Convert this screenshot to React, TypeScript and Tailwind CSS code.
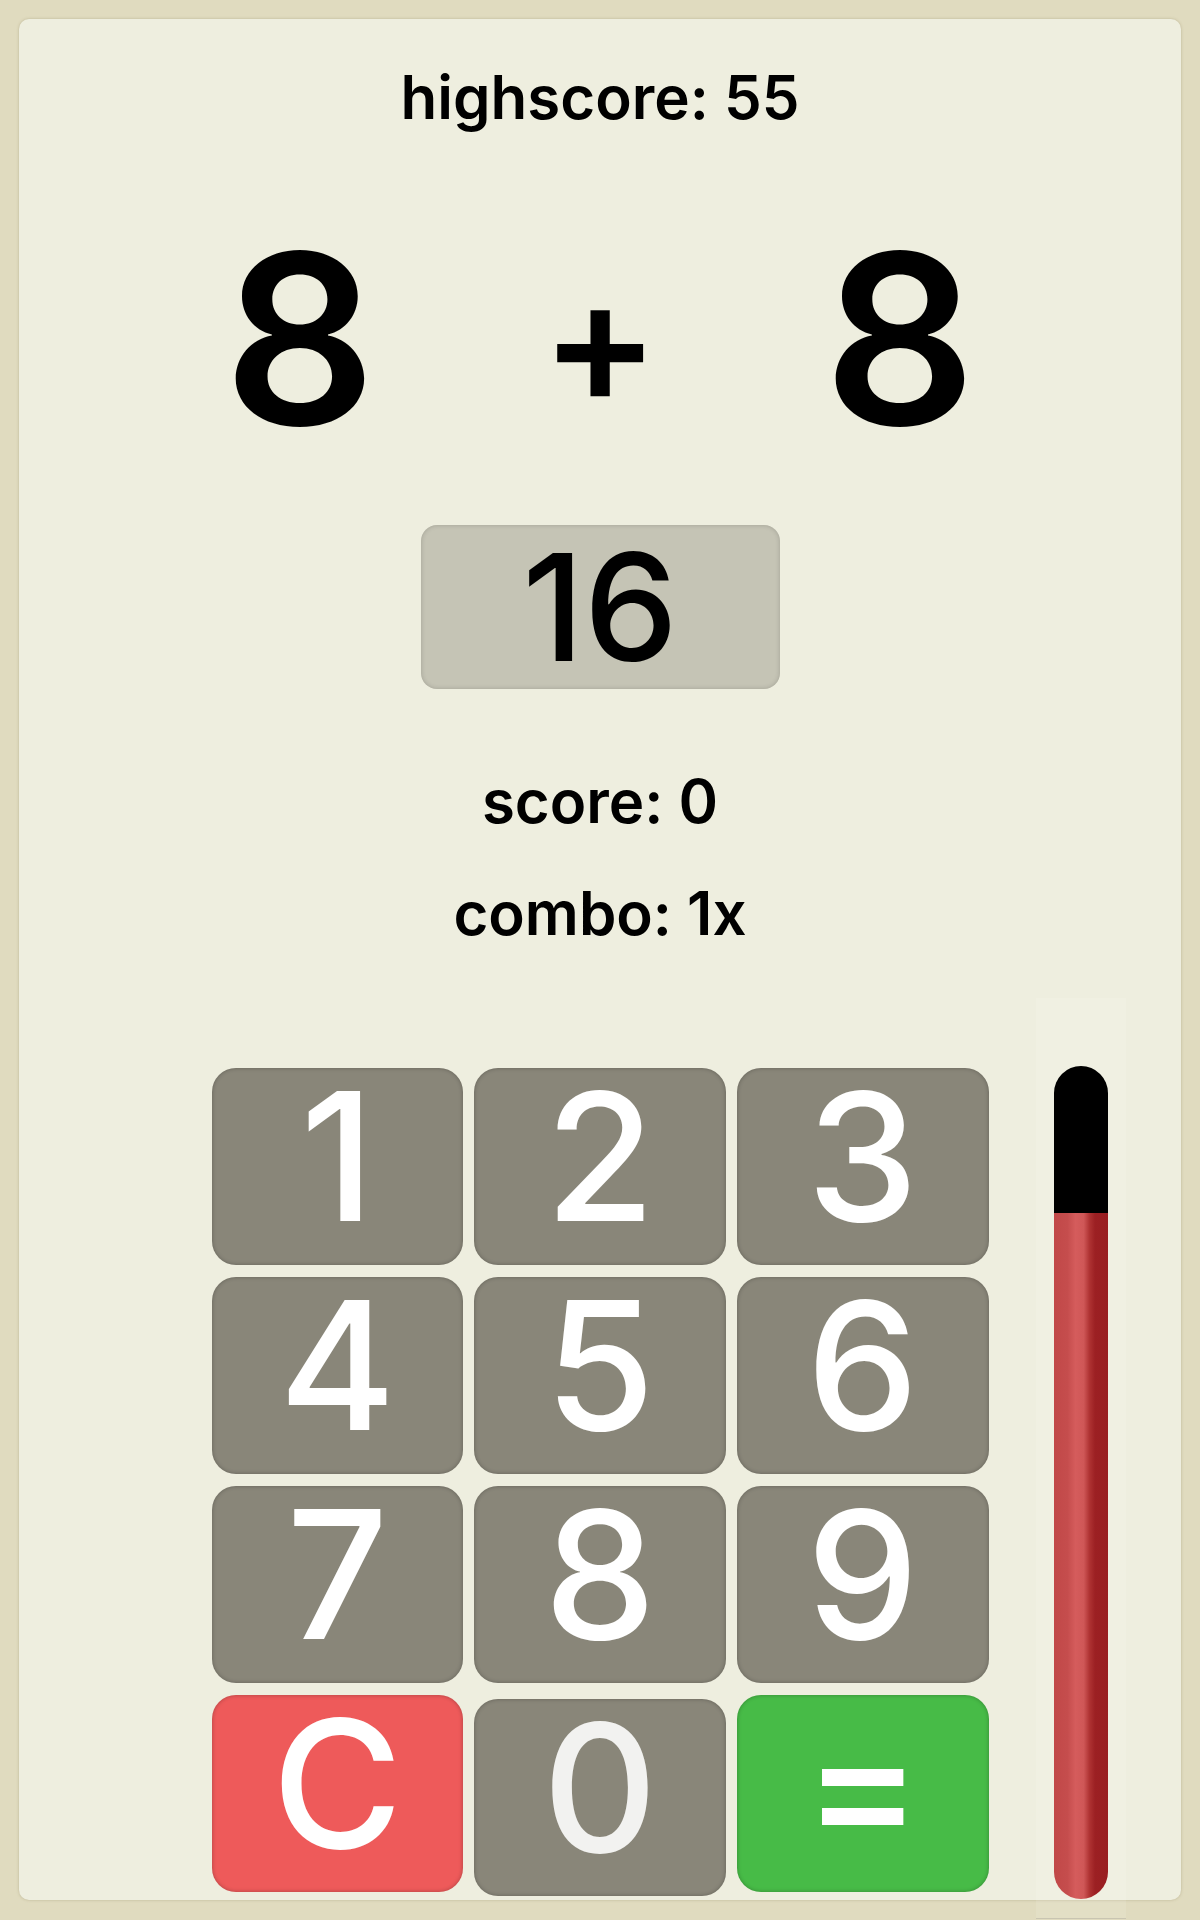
import React from 'react'

const KEYS = [
  { label: '1', tone: 'gray' },
  { label: '2', tone: 'gray' },
  { label: '3', tone: 'gray' },
  { label: '4', tone: 'gray' },
  { label: '5', tone: 'gray' },
  { label: '6', tone: 'gray' },
  { label: '7', tone: 'gray' },
  { label: '8', tone: 'gray' },
  { label: '9', tone: 'gray' },
  { label: 'C', tone: 'red' },
  { label: '0', tone: 'zero' },
  { label: '=', tone: 'green' },
]

const TONES: Record<string, string> = {
  gray: 'bg-[#898679] text-white',
  zero: 'bg-[#898679] text-[#f2f2f0] translate-y-[4px]',
  red: 'bg-[#ee5a5a] text-white',
  green: 'bg-[#47bb47] text-white',
}

function Key({ label, tone }: { label: string; tone: string }) {
  return (
    <button
      className={`flex h-[197px] items-center justify-center rounded-[24px] pb-[20px] text-[178px] font-medium leading-none shadow-[inset_0_0_4px_rgba(0,0,0,0.28)] ${TONES[tone]}`}
    >
      {label}
    </button>
  )
}

function TimeBar({ used }: { used: number }) {
  return (
    <div className="flex h-[921px] w-[90px] justify-center border-b border-[#c9c5b1] bg-white/10 pt-[68px]">
      <div className="flex h-[833px] w-[54px] flex-col overflow-hidden rounded-full">
        <div className="shrink-0 bg-black" style={{ height: used }} />
        <div className="flex-1 bg-[linear-gradient(to_right,#c14848_0%,#c54d4d_25%,#d55c5c_40%,#cf5757_55%,#ae3232_66%,#9c2023_76%,#991e21_100%)]" />
      </div>
    </div>
  )
}

export default function App() {
  return (
    <div
      className="min-h-[1920px] bg-[#e0dbbf] px-[19px] pt-[19px] text-black"
      style={{ fontFamily: 'Inter, "Noto Sans", sans-serif' }}
    >
      <div className="flex h-[1881px] flex-col items-center rounded-[10px] bg-[#eeeedf] pt-[48px] shadow-[0_0_3px_rgba(120,110,70,0.35)]">
        <div className="shrink-0 text-[60px] font-semibold leading-none">highscore: 55</div>

        <div className="mt-[92px] flex h-[238px] shrink-0 items-center text-[238px] font-semibold leading-none">
          <span className="w-[300px] text-center">8</span>
          <span className="w-[300px] pt-[4px] text-center text-[175px]">+</span>
          <span className="w-[300px] text-center">8</span>
        </div>

        <div className="mt-[68px] flex h-[164px] w-[359px] shrink-0 items-center justify-center rounded-[16px] bg-[#c5c4b5] text-[149px] font-medium leading-none shadow-[inset_0_0_5px_rgba(0,0,0,0.18)]">
          16
        </div>

        <div className="mt-[82px] shrink-0 text-[60px] font-semibold leading-none">score: 0</div>
        <div className="mt-[52px] shrink-0 text-[60px] font-semibold leading-none">combo: 1x</div>

        <div className="mt-[55px] grid w-full shrink-0 grid-cols-[1fr_777px_1fr]">
          <div />
          <div className="mt-[70px] grid grid-cols-3 gap-x-[11px] gap-y-[12px] self-start">
            {KEYS.map(k => (
              <Key key={k.label} label={k.label} tone={k.tone} />
            ))}
          </div>
          <div className="pl-[47px]">
            <TimeBar used={147} />
          </div>
        </div>
      </div>
    </div>
  )
}
